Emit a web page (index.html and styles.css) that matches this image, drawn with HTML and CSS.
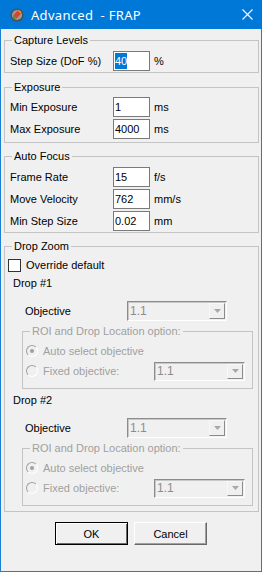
FILE: index.html
```html
<!DOCTYPE html>
<html lang="en">
<head>
    <meta charset="UTF-8">
    <title>Advanced - FRAP</title>
    <link rel="stylesheet" href="styles.css">
</head>
<body>
<div class="window">
    <div class="titlebar">
        <svg class="app-icon" width="14" height="14" viewBox="0 0 14 14">
            <circle cx="7" cy="7" r="6.6" fill="#4f4f4f"/>
            <circle cx="7" cy="7" r="5.1" fill="#9a9a9a"/>
            <path d="M3.2 7.5 L7.8 2.6 L11 5.6 L6.6 10.6 Z" fill="#d8432a"/>
            <path d="M3.2 7.5 L6.6 10.6 L4.6 11.2 L2.8 9.4 Z" fill="#3f9b3a"/>
            <path d="M7.8 2.6 L9.6 2.6 L11 4 L11 5.6 Z" fill="#f0a030"/>
        </svg>
        <span class="title">Advanced&nbsp; - FRAP</span>
        <svg class="close" width="11" height="11" viewBox="0 0 11 11">
            <path d="M0.5 0.5 L10.5 10.5 M10.5 0.5 L0.5 10.5" stroke="#fff" stroke-width="1.1"/>
        </svg>
    </div>

    <div class="client">
        <fieldset class="group group-capture">
            <legend>Capture Levels</legend>
            <div class="field-row">
                <span class="field-label">Step Size (DoF %)</span>
                <span class="textbox"><span class="selected">40</span></span>
                <span class="unit">%</span>
            </div>
        </fieldset>

        <fieldset class="group group-exposure">
            <legend>Exposure</legend>
            <div class="field-row">
                <span class="field-label">Min Exposure</span>
                <span class="textbox">1</span>
                <span class="unit">ms</span>
            </div>
            <div class="field-row">
                <span class="field-label">Max Exposure</span>
                <span class="textbox">4000</span>
                <span class="unit">ms</span>
            </div>
        </fieldset>

        <fieldset class="group group-focus">
            <legend>Auto Focus</legend>
            <div class="field-row">
                <span class="field-label">Frame Rate</span>
                <span class="textbox">15</span>
                <span class="unit">f/s</span>
            </div>
            <div class="field-row">
                <span class="field-label">Move Velocity</span>
                <span class="textbox">762</span>
                <span class="unit">mm/s</span>
            </div>
            <div class="field-row">
                <span class="field-label">Min Step Size</span>
                <span class="textbox">0.02</span>
                <span class="unit">mm</span>
            </div>
        </fieldset>

        <fieldset class="group group-drop">
            <legend>Drop Zoom</legend>
            <div class="check-row">
                <span class="checkbox"></span>
                <span>Override default</span>
            </div>

            <div class="drop-title">Drop #1</div>
            <div class="objective-row">
                <span class="objective-label">Objective</span>
                <div class="combo">
                    <span class="combo-text">1.1</span>
                    <span class="combo-btn"><svg width="7" height="4" viewBox="0 0 7 4"><path d="M0 0 H7 L3.5 4 Z" fill="#a8a8a8"/></svg></span>
                </div>
            </div>
            <fieldset class="option-group">
                <legend>ROI and Drop Location option:</legend>
                <div class="radio-row">
                    <span class="radio checked"></span>
                    <span class="radio-label">Auto select objective</span>
                </div>
                <div class="radio-row">
                    <span class="radio"></span>
                    <span class="radio-label">Fixed objective:</span>
                    <div class="combo combo-small">
                        <span class="combo-text">1.1</span>
                        <span class="combo-btn"><svg width="7" height="4" viewBox="0 0 7 4"><path d="M0 0 H7 L3.5 4 Z" fill="#a8a8a8"/></svg></span>
                    </div>
                </div>
            </fieldset>

            <div class="drop-title drop-title-next">Drop #2</div>
            <div class="objective-row">
                <span class="objective-label">Objective</span>
                <div class="combo">
                    <span class="combo-text">1.1</span>
                    <span class="combo-btn"><svg width="7" height="4" viewBox="0 0 7 4"><path d="M0 0 H7 L3.5 4 Z" fill="#a8a8a8"/></svg></span>
                </div>
            </div>
            <fieldset class="option-group">
                <legend>ROI and Drop Location option:</legend>
                <div class="radio-row">
                    <span class="radio checked"></span>
                    <span class="radio-label">Auto select objective</span>
                </div>
                <div class="radio-row">
                    <span class="radio"></span>
                    <span class="radio-label">Fixed objective:</span>
                    <div class="combo combo-small">
                        <span class="combo-text">1.1</span>
                        <span class="combo-btn"><svg width="7" height="4" viewBox="0 0 7 4"><path d="M0 0 H7 L3.5 4 Z" fill="#a8a8a8"/></svg></span>
                    </div>
                </div>
            </fieldset>
        </fieldset>

        <div class="buttons">
            <button class="btn btn-default">OK</button>
            <button class="btn">Cancel</button>
        </div>
    </div>
</div>
</body>
</html>
```

FILE: styles.css
```css
body {
    margin: 0;
    font-family: "Liberation Sans", Arial, sans-serif;
    font-size: 11px;
    color: #000;
    background-color: #f0f0f0;
}
.window {
    width: 262px;
    height: 572px;
    box-sizing: border-box;
    border: 1px solid #1c80d5;
    border-top: none;
    display: flex;
    flex-direction: column;
}
.titlebar {
    height: 29px;
    flex-shrink: 0;
    margin: 0 -1px;
    background-color: #0078d7;
    color: #fff;
    display: flex;
    align-items: center;
}
.app-icon {
    margin-left: 10px;
    margin-right: 7px;
}
.title {
    font-family: "Noto Sans", "Open Sans", sans-serif;
    font-size: 13px;
    letter-spacing: 0.3px;
}
.close {
    margin-left: auto;
    margin-right: 9px;
}
.client {
    flex: 1;
    display: flex;
    flex-direction: column;
}

/* group boxes */
fieldset {
    border: 1px solid #c4c4c4;
    margin: 0;
    padding: 0;
    min-width: 0;
}
legend {
    margin-left: 7px;
    padding: 0 2px;
    height: 13px;
    line-height: 13px;
}
.group {
    margin: 7px 2px 0 3px;
}
.group-capture {
    margin-top: 5px;
    padding-top: 3px;
}
.group-exposure {
    margin-top: 8px;
    padding: 2px 0 2px;
}
.group-focus {
    padding-top: 3px;
}
.group-drop {
    padding-bottom: 5px;
}
.field-row {
    display: flex;
    align-items: center;
    height: 22px;
    padding-left: 5px;
}
.field-label {
    width: 103px;
    flex-shrink: 0;
}
.textbox {
    width: 37px;
    height: 20px;
    box-sizing: border-box;
    border: 1px solid #7a7a7a;
    background-color: #fff;
    line-height: 18px;
    padding-left: 1px;
}
.selected {
    background-color: #0078d7;
    color: #fff;
    padding: 2px 0;
}
.unit {
    margin-left: 4px;
}

/* drop zoom */
.check-row {
    display: flex;
    align-items: center;
    height: 16px;
    margin-top: 4px;
    padding-left: 3px;
}
.checkbox {
    width: 13px;
    height: 13px;
    box-sizing: border-box;
    border: 1px solid #333;
    background-color: #fff;
    margin-right: 5px;
}
.drop-title {
    height: 18px;
    line-height: 18px;
    padding-left: 8px;
    margin-top: 1px;
}
.drop-title-next {
    margin-top: 2px;
}
.objective-row {
    display: flex;
    align-items: center;
    height: 21px;
    margin-top: 8px;
    padding-left: 20px;
}
.objective-label {
    width: 102px;
    flex-shrink: 0;
}
.combo {
    width: 100px;
    height: 20px;
    box-sizing: border-box;
    border: 1px solid;
    border-color: #8c8c8c #fff #fff #8c8c8c;
    box-shadow: inset 1px 1px #c8c8c8;
    background-color: #f0f0f0;
    display: flex;
    align-items: stretch;
    padding: 1px 1px 1px 2px;
}
.combo-small {
    width: 91px;
    height: 19px;
}
.combo-text {
    flex: 1;
    color: #8c8c8c;
    display: flex;
    align-items: center;
    font-size: 12px;
}
.combo-btn {
    width: 16px;
    box-sizing: border-box;
    border: 1px solid;
    border-color: #f8f8f8 #8c8c8c #8c8c8c #f8f8f8;
    display: flex;
    align-items: center;
    justify-content: center;
}
.option-group {
    margin: 4px 5px 0 17px;
    padding: 3px 0 7px;
}
.option-group legend {
    color: #a0a0a0;
}
.radio-row {
    display: flex;
    align-items: center;
    height: 20px;
    padding-left: 3px;
    color: #a0a0a0;
}
.radio {
    width: 12px;
    height: 12px;
    box-sizing: border-box;
    border-radius: 50%;
    border: 1px solid;
    border-color: #a0a0a0 #fff #fff #a0a0a0;
    background-color: #f0f0f0;
    margin-right: 5px;
    position: relative;
}
.radio.checked::after {
    content: "";
    position: absolute;
    left: 3px;
    top: 3px;
    width: 4px;
    height: 4px;
    border-radius: 50%;
    background-color: #a0a0a0;
}
.radio-label {
    width: 111px;
    flex-shrink: 0;
}

/* dialog buttons */
.buttons {
    display: flex;
    justify-content: center;
    gap: 6px;
    margin-top: 10px;
}
.btn {
    width: 73px;
    height: 23px;
    box-sizing: border-box;
    padding: 0;
    font-family: "Liberation Sans", Arial, sans-serif;
    font-size: 11px;
    color: #000;
    background-color: #f0f0f0;
    border: 1px solid;
    border-color: #fff #696969 #696969 #fff;
    box-shadow: inset -1px -1px #a0a0a0;
}
.btn-default {
    border-color: #000;
    box-shadow: inset 1px 1px #fff, inset -1px -1px #696969;
}
```
